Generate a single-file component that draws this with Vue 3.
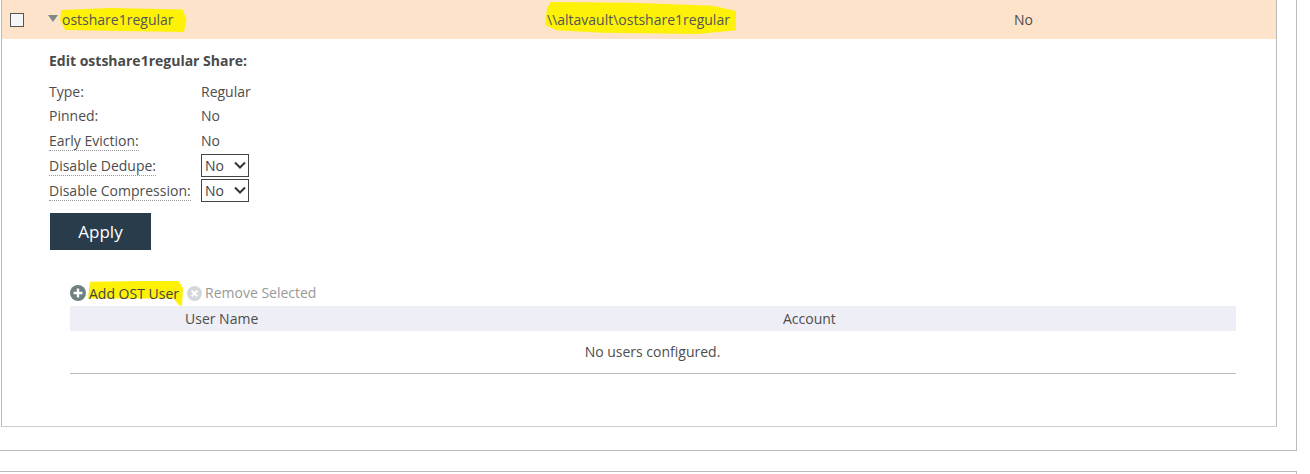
<script setup>
const fields = [
  { label: 'Type:', value: 'Regular' },
  { label: 'Pinned:', value: 'No' },
  { label: 'Early Eviction:', value: 'No', dotted: true }
]
const selects = ['Disable Dedupe:', 'Disable Compression:']
</script>

<template>
  <div class="page">
    <div class="outer">
      <div class="panel">
        <div class="row">
          <span class="check"></span>
          <span class="caret"></span>
          <span class="name"><mark class="hl hl-name">ostshare1regular</mark></span>
          <span class="path"><mark class="hl hl-path">\\altavault\ostshare1regular</mark></span>
          <span class="flag">No</span>
        </div>

        <div class="body">
          <h4>Edit ostshare1regular Share:</h4>
          <div v-for="f in fields" :key="f.label" class="field">
            <span class="label"><span :class="{ dotted: f.dotted }">{{ f.label }}</span></span>
            <span>{{ f.value }}</span>
          </div>
          <div v-for="s in selects" :key="s" class="field field-select">
            <span class="label"><span class="dotted">{{ s }}</span></span>
            <span class="sel">
              <select><option>No</option></select>
              <svg class="chev" viewBox="0 0 12 8"><path d="M1 1.5l5 5 5-5" fill="none" stroke="#333" stroke-width="2" /></svg>
            </span>
          </div>
          <button class="apply">Apply</button>

          <div class="users">
            <div class="actions">
              <svg class="ico" viewBox="0 0 16 16">
                <circle cx="8" cy="8" r="8" fill="#6f8080" />
                <path d="M8 3.6v8.8M3.6 8h8.8" stroke="#fff" stroke-width="2.4" />
              </svg>
              <mark class="hl hl-add">Add OST User</mark>
              <svg class="ico ico-remove" viewBox="0 0 16 16">
                <circle cx="8" cy="8" r="8" fill="#d5d8d8" />
                <path d="M5 5l6 6M11 5l-6 6" stroke="#fff" stroke-width="2.2" />
              </svg>
              <span class="remove">Remove Selected</span>
            </div>
            <div class="thead">
              <span class="th-user">User Name</span>
              <span class="th-account">Account</span>
            </div>
            <div class="empty">No users configured.</div>
          </div>
        </div>
      </div>
    </div>
    <div class="next"></div>
  </div>
</template>

<style>
body {
  background: #fff;
}
</style>

<style scoped>
.page {
  width: 1297px;
  height: 474px;
  overflow: hidden;
  font-family: "Open Sans", sans-serif;
  font-size: 14px;
  color: #4d4d4d;
}

.outer {
  height: 451px;
  box-sizing: border-box;
  border-right: 1px solid #bbb;
  border-bottom: 1px solid #bbb;
}

.panel {
  width: 1276px;
  height: 427px;
  box-sizing: border-box;
  margin-left: 1px;
  border-left: 1px solid #bbb;
  border-right: 1px solid #bbb;
  border-bottom: 1px solid #ccc;
}

.row {
  height: 39px;
  background: #fde3c9;
  display: flex;
  align-items: center;
}

.check {
  width: 12px;
  height: 12px;
  margin-left: 8px;
  border: 1px solid #555;
  background: #f6f6f8;
}

.caret {
  margin-left: 24px;
  width: 0;
  height: 0;
  border-left: 5px solid transparent;
  border-right: 5px solid transparent;
  border-top: 7px solid #7d8a8a;
  margin-bottom: 2px;
}

.name {
  margin-left: 4px;
  width: 485px;
}

.path {
  width: 467px;
}

.hl {
  position: relative;
  isolation: isolate;
  background: none;
  color: #555;
}

.hl::before {
  content: "";
  position: absolute;
  z-index: -1;
  background: #fdf207;
}

.hl-name::before {
  top: -2px;
  bottom: -3px;
  left: -2px;
  right: -13px;
  clip-path: polygon(1% 8%, 40% 0, 97% 6%, 100% 50%, 98% 100%, 50% 96%, 4% 92%, 0 50%);
}

.hl-path::before {
  top: -8px;
  bottom: -5px;
  left: -2px;
  right: -6px;
  clip-path: polygon(3% 0, 45% 2%, 88% 12%, 100% 28%, 100% 88%, 80% 100%, 30% 96%, 6% 88%, 0 72%, 1% 20%);
}

.hl-add {
  color: #444;
  margin-left: 3px;
}

.hl-add::before {
  top: -3px;
  bottom: -3px;
  left: -1px;
  right: -4px;
  clip-path: polygon(2% 5%, 95% 0, 100% 30%, 99% 100%, 96% 100%, 90% 72%, 0 72%);
}

.body {
  padding: 12px 0 0 47px;
}

h4 {
  margin: 0 0 9px;
  font-size: 14px;
  line-height: 19px;
  font-weight: 700;
  color: #4a4a4a;
}

.field {
  display: flex;
  align-items: center;
  height: 25px;
}

h4 + .field {
  height: 24px;
}

.label {
  width: 152px;
  flex: none;
}

.dotted {
  border-bottom: 1px dotted #999;
}

.sel {
  position: relative;
  display: block;
  width: 48px;
  height: 23px;
}

select {
  display: block;
  appearance: none;
  width: 48px;
  height: 23px;
  font-family: inherit;
  font-size: 14px;
  color: #444;
  background: #fff;
  border: 1px solid #444;
  border-radius: 0;
  padding: 0 0 0 3px;
}

.chev {
  position: absolute;
  top: 7px;
  right: 3px;
  width: 12px;
  height: 8px;
  pointer-events: none;
}

.apply {
  display: block;
  width: 101px;
  height: 37px;
  margin: 10px 0 0 1px;
  border: none;
  background: #283c4b;
  color: #fff;
  font-family: inherit;
  font-size: 17px;
}

.users {
  margin: 33px 0 0 21px;
  width: 1166px;
}

.actions {
  display: flex;
  align-items: center;
  height: 20px;
}

.ico {
  width: 16px;
  height: 16px;
  flex: none;
}

.ico-remove {
  width: 15px;
  height: 15px;
  margin-left: 8px;
}

.remove {
  margin: 0 0 2px 3px;
  color: #999;
}

.thead {
  height: 25px;
  margin-top: 3px;
  background: #edeef6;
  display: flex;
  align-items: center;
}

.th-user {
  margin-left: 115px;
  width: 598px;
}

.empty {
  height: 42px;
  line-height: 42px;
  text-align: center;
  border-bottom: 1px solid #bbb;
  padding-right: 1px;
}

.next {
  margin-top: 20px;
  border-top: 1px solid #bbb;
  border-right: 1px solid #bbb;
  height: 10px;
}
</style>
